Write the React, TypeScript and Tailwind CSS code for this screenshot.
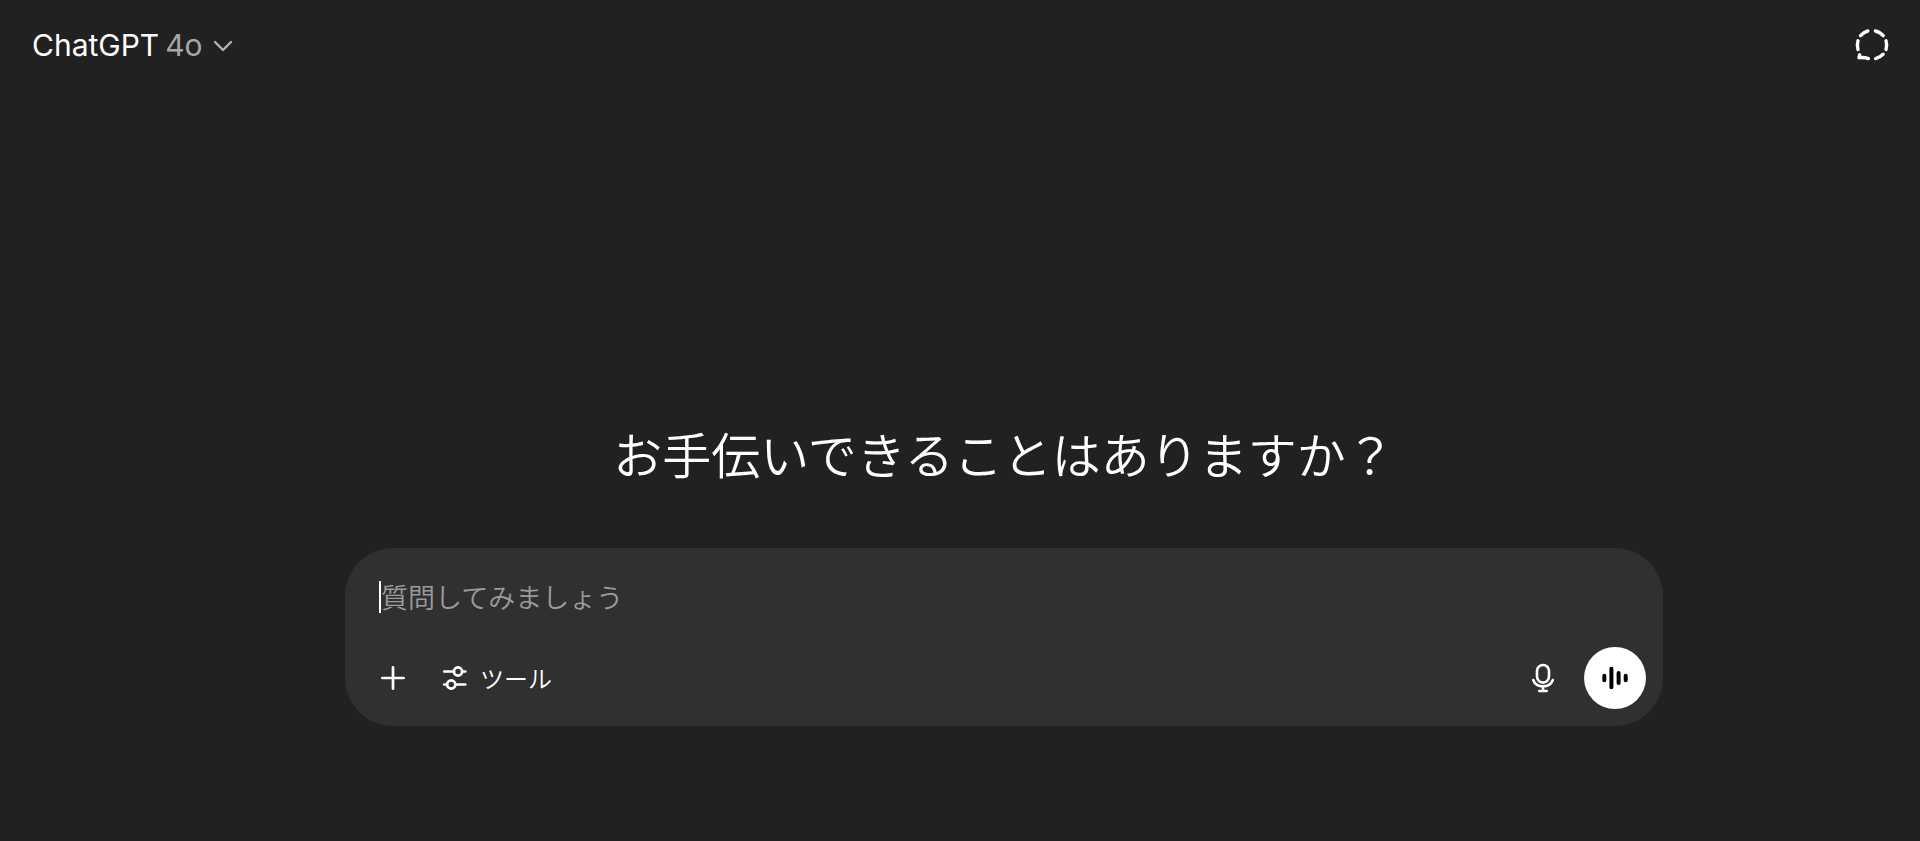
import { useState } from "react";

const ChevronIcon = () => (
  <svg width="20" height="12" viewBox="0 0 20 12" fill="none" stroke="#b4b4b4" strokeWidth="2.4" strokeLinecap="round" strokeLinejoin="round" aria-hidden="true">
    <path d="M2 2l8 8 8-8" />
  </svg>
);

const TemporaryChatIcon = () => (
  <svg width="36" height="36" viewBox="0 0 36 36" fill="none" stroke="#ffffff" strokeWidth="3.4" strokeLinecap="round" strokeLinejoin="round" aria-hidden="true">
    <path d="M6.6 8.7A14.5 14.5 0 0 1 13.8 4" />
    <path d="M21.4 4A14.5 14.5 0 0 1 29.2 8.7" />
    <path d="M32 13.8A14.5 14.5 0 0 1 32 22.4" />
    <path d="M29.2 27.2A14.5 14.5 0 0 1 21.6 31.6" />
    <path d="M4 13.8A14.5 14.5 0 0 0 4 22.4" />
    <path d="M14.4 31.6C11 30.2 10.5 30.3 5 30.7L5.7 27.8" />
  </svg>
);

const PlusIcon = () => (
  <svg width="26" height="26" viewBox="0 0 26 26" fill="none" stroke="#ffffff" strokeWidth="2.7" strokeLinecap="round" aria-hidden="true">
    <path d="M13 2.3v21.4M2.3 13h21.4" />
  </svg>
);

const ToolsIcon = () => (
  <svg width="26" height="26" viewBox="0 0 26 26" fill="none" stroke="#ffffff" strokeWidth="2.7" strokeLinecap="round" aria-hidden="true">
    <path d="M2.2 6.5H12M20.5 6.5h2.8M2.2 19.5h2.8M14 19.5h9.3" />
    <circle cx="16" cy="6.5" r="4.1" />
    <circle cx="9.2" cy="19.5" r="4.1" />
  </svg>
);

const MicIcon = () => (
  <svg width="24" height="30" viewBox="0 0 24 30" fill="none" stroke="#ffffff" strokeWidth="2.6" strokeLinecap="round" aria-hidden="true">
    <rect x="6" y="2" width="12" height="17.6" rx="6" />
    <path d="M2.2 17C5.5 25.5 18.5 25.5 21.8 17M12 23.5v4M8.3 28h7.4" />
  </svg>
);

const VoiceIcon = () => (
  <svg width="28" height="26" viewBox="0 0 28 26" fill="none" stroke="#000000" strokeWidth="4" strokeLinecap="round" aria-hidden="true">
    <path d="M3.3 10.7v4.6M10.4 3.7v18.6M17.6 8v10M24.7 10.7v4.6" />
  </svg>
);

const Header = () => (
  <header className="flex h-[90px] items-center justify-between pr-[30px] pl-8">
    <button type="button" className="flex items-center gap-1.5 font-['Inter',sans-serif] text-3xl leading-10 text-white">
      <span>ChatGPT</span>
      <span className="text-[#a8a8a8]">4o</span>
      <span className="pt-0.5 pl-1">
        <ChevronIcon />
      </span>
    </button>
    <button type="button" aria-label="一時チャット">
      <TemporaryChatIcon />
    </button>
  </header>
);

const Composer = () => {
  const [prompt, setPrompt] = useState("");

  return (
    <form
      onSubmit={(event) => event.preventDefault()}
      className="w-full max-w-[1318px] rounded-[48px] bg-[#303030] pt-[33px] pr-[17px] pb-[17px] pl-[34px]"
    >
      <div className="flex h-8 items-center">
        {/* Text cursor */}
        {prompt === "" && <span className="h-8 w-0.5 bg-white" />}
        <input
          type="text"
          value={prompt}
          onChange={(event) => setPrompt(event.target.value)}
          aria-label="質問"
          placeholder="質問してみましょう"
          className="h-8 min-w-0 flex-1 bg-transparent text-[27px] leading-8 font-[350] text-white caret-transparent outline-none placeholder:text-[#9b9b9b]"
        />
      </div>
      <div className="mt-[34px] flex items-center pl-px text-white">
        <button type="button" aria-label="追加">
          <PlusIcon />
        </button>
        <button type="button" className="ml-9 flex items-center gap-3 text-2xl leading-8 font-[350]">
          <ToolsIcon />
          ツール
        </button>
        <button type="button" aria-label="音声入力" className="ml-auto">
          <MicIcon />
        </button>
        <button type="button" aria-label="音声モード" className="ml-[29px] flex size-[62px] items-center justify-center rounded-full bg-white">
          <VoiceIcon />
        </button>
      </div>
    </form>
  );
};

export default function App() {
  return (
    <div className="flex min-h-screen flex-col bg-[#212121] font-['Noto_Sans_CJK_JP',sans-serif]">
      <Header />
      <main className="flex flex-1 flex-col items-center justify-end pr-4 pb-[115px] pl-[104px]">
        <h1 className="mb-[63px] text-center text-[49px] leading-[64px] font-[350] text-white">お手伝いできることはありますか？</h1>
        <Composer />
      </main>
    </div>
  );
}
